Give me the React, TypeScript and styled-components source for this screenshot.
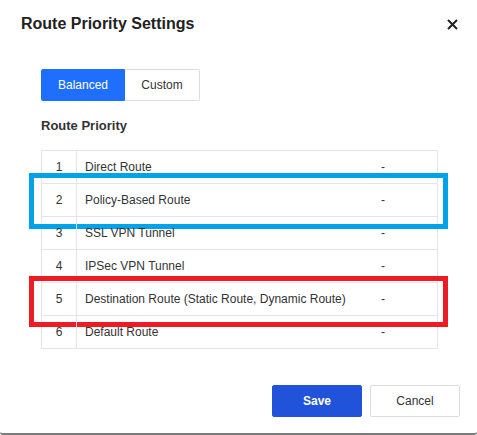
import React from 'react'
import { createGlobalStyle, styled } from 'styled-components'

const GlobalStyle = createGlobalStyle`
  html, body {
    margin: 0;
    padding: 0;
    background: #ffffff;
  }
  body {
    font-family: "Liberation Sans", Arial, sans-serif;
    color: #333333;
  }
`

type Mark = 'blue' | 'red'

interface Route {
  id: number
  name: string
  value: string
  mark?: Mark
}

const routes: Route[] = [
  { id: 1, name: 'Direct Route', value: '-' },
  { id: 2, name: 'Policy-Based Route', value: '-', mark: 'blue' },
  { id: 3, name: 'SSL VPN Tunnel', value: '-' },
  { id: 4, name: 'IPSec VPN Tunnel', value: '-' },
  { id: 5, name: 'Destination Route (Static Route, Dynamic Route)', value: '-', mark: 'red' },
  { id: 6, name: 'Default Route', value: '-' },
]

export default function App() {
  return (
    <>
      <GlobalStyle />
      <Dialog>
        <Header>
          <Title>Route Priority Settings</Title>
          <CloseButton aria-label="Close">
            <svg width="11" height="11" viewBox="0 0 11 11">
              <path d="M1 1 L10 10 M10 1 L1 10" stroke="#222" strokeWidth="2" />
            </svg>
          </CloseButton>
        </Header>

        <Body>
          <Segmented>
            <Segment $active>Balanced</Segment>
            <Segment>Custom</Segment>
          </Segmented>

          <SectionLabel>Route Priority</SectionLabel>

          <Table>
            {routes.map((r) => (
              <Row key={r.id}>
                <IndexCell>{r.id}</IndexCell>
                <NameCell>{r.name}</NameCell>
                <ValueCell>{r.value}</ValueCell>
                {r.mark && <Annotation $mark={r.mark} />}
              </Row>
            ))}
          </Table>
        </Body>

        <Footer>
          <Button $primary>Save</Button>
          <Button>Cancel</Button>
        </Footer>
      </Dialog>
    </>
  )
}

const Dialog = styled.div`
  width: 477px;
  height: 435px;
  box-sizing: border-box;
  background: #ffffff;
  border-bottom: 2px solid #7a7a7a;
  border-radius: 0 0 3px 3px;
  display: flex;
  flex-direction: column;
`

const Header = styled.div`
  display: flex;
  align-items: center;
  justify-content: space-between;
  padding: 15px 19px 0 21px;
  height: 18px;
`

const Title = styled.h1`
  margin: 0;
  font-size: 16px;
  line-height: 18px;
  font-weight: bold;
  color: #222222;
`

const CloseButton = styled.button`
  border: none;
  background: none;
  padding: 0;
  display: flex;
  cursor: pointer;
`

const Body = styled.div`
  padding: 36px 39px 0 41px;
  display: flex;
  flex-direction: column;
`

const Segmented = styled.div`
  display: flex;
  align-self: flex-start;
  height: 32px;
`

const Segment = styled.button<{ $active?: boolean }>`
  box-sizing: border-box;
  height: 32px;
  padding: 0;
  width: ${(p) => (p.$active ? '84px' : '75px')};
  font-family: inherit;
  font-size: 12px;
  cursor: pointer;
  color: ${(p) => (p.$active ? '#ffffff' : '#333333')};
  background: ${(p) => (p.$active ? '#1f6fff' : '#ffffff')};
  border: 1px solid ${(p) => (p.$active ? '#1f6fff' : '#dddddd')};
  border-left: ${(p) => (p.$active ? '1px solid #1f6fff' : 'none')};
  border-radius: ${(p) => (p.$active ? '2px 0 0 2px' : '0 2px 2px 0')};
`

const SectionLabel = styled.div`
  margin-top: 17px;
  font-size: 13px;
  line-height: 16px;
  font-weight: bold;
  color: #333333;
`

const Table = styled.div`
  margin-top: 16px;
  border: 1px solid #e3e4ef;
  border-top: none;
  width: 397px;
  box-sizing: border-box;
`

const Row = styled.div`
  position: relative;
  display: grid;
  grid-template-columns: 35px 295px 1fr;
  height: 33px;
  box-sizing: border-box;
  border-top: 1px solid #e3e4ef;
  font-size: 12px;
  color: #333333;
`

const IndexCell = styled.div`
  display: flex;
  align-items: center;
  justify-content: center;
  border-right: 1px solid #e3e4ef;
`

const NameCell = styled.div`
  display: flex;
  align-items: center;
  padding-left: 8px;
`

const ValueCell = styled.div`
  display: flex;
  align-items: center;
  padding-left: 9px;
`

const annotationBox = {
  blue: { color: '#00a2e8', top: -11, bottom: -13 },
  red: { color: '#ed1c24', top: -7, bottom: -12 },
}

const Annotation = styled.div<{ $mark: Mark }>`
  position: absolute;
  left: -13px;
  right: -11px;
  top: ${(p) => annotationBox[p.$mark].top}px;
  bottom: ${(p) => annotationBox[p.$mark].bottom}px;
  border: 5px solid ${(p) => annotationBox[p.$mark].color};
  pointer-events: none;
`

const Footer = styled.div`
  margin-top: auto;
  margin-bottom: 16px;
  display: flex;
  justify-content: flex-end;
  gap: 8px;
  padding-right: 17px;
`

const Button = styled.button<{ $primary?: boolean }>`
  width: 90px;
  height: 32px;
  box-sizing: border-box;
  font-family: inherit;
  font-size: 12px;
  font-weight: ${(p) => (p.$primary ? 'bold' : 'normal')};
  border-radius: 2px;
  cursor: pointer;
  color: ${(p) => (p.$primary ? '#ffffff' : '#333333')};
  background: ${(p) => (p.$primary ? '#2152da' : '#ffffff')};
  border: 1px solid ${(p) => (p.$primary ? '#2152da' : '#dddddd')};
`
